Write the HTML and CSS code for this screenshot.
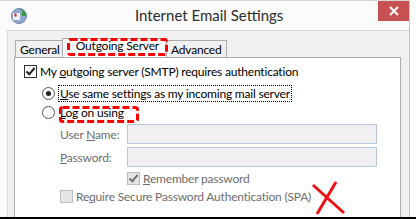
FILE: index.html
```html
<!DOCTYPE html>
<html lang="en">
<head>
    <meta charset="UTF-8">
    <title>Internet Email Settings</title>
    <link rel="stylesheet" href="styles.css">
</head>
<body>

<div class="screen">
    <div class="window">
        <div class="titlebar">
            <svg class="app-icon" width="18" height="18" viewBox="0 0 18 18">
                <circle cx="9" cy="9" r="7.5" fill="#8fa9cf"/>
                <path d="M9 1.5 A7.5 7.5 0 0 1 16.5 9 L12 9 L12 4 Z" fill="#3c9c4a"/>
                <path d="M3 6 L10 6 L10 13 L3 13 Z" fill="#eef2f8"/>
                <rect x="4.5" y="6.5" width="2" height="3" fill="#d42020"/>
                <circle cx="9" cy="9" r="7.5" fill="none" stroke="#6e86ad" stroke-width="1"/>
            </svg>
            <div class="title">Internet Email Settings</div>
            <div class="close-btn">
                <svg width="10" height="10" viewBox="0 0 10 10">
                    <path d="M1 1 L9 9 M9 1 L1 9" stroke="#fff" stroke-width="2"/>
                </svg>
            </div>
        </div>

        <div class="dialog">
            <div class="tabs">
                <div class="tab">General</div>
                <div class="tab tab-active">
                    Outgoing Server
                    <svg class="mark tab-mark" width="101" height="18" viewBox="0 0 101 18">
                        <rect x="1.5" y="1.5" width="98" height="15" rx="2" fill="none" stroke="#f00" stroke-width="3" stroke-dasharray="7 3"/>
                    </svg>
                </div>
                <div class="tab">Advanced</div>
            </div>

            <div class="page">
                <div class="row">
                    <span class="check checked"></span>
                    <span>My <u>o</u>utgoing server (SMTP) requires authentication</span>
                </div>
                <div class="row indent-1 first-option">
                    <span class="radio selected"></span>
                    <span class="focus"><u>U</u>se same settings as my incoming mail server</span>
                </div>
                <div class="row indent-1">
                    <span class="radio"></span>
                    <span class="marked">
                        <u>L</u>og on using
                        <svg class="mark" width="80" height="17" viewBox="0 0 80 17">
                            <rect x="1.5" y="1.5" width="77" height="14" rx="2" fill="none" stroke="#f00" stroke-width="3" stroke-dasharray="7 3"/>
                        </svg>
                    </span>
                </div>
                <div class="field indent-2 first-field">
                    <label class="field-label">User <u>N</u>ame:</label>
                    <div class="input"></div>
                </div>
                <div class="field indent-2">
                    <label class="field-label"><u>P</u>assword:</label>
                    <div class="input"></div>
                </div>
                <div class="row indent-3 disabled short-row">
                    <span class="check checked off"></span>
                    <span><u>R</u>emember password</span>
                </div>
                <div class="row indent-2 disabled">
                    <span class="check off"></span>
                    <span>Re<u>q</u>uire Secure Password Authentication (SPA)</span>
                </div>

                <svg class="cross" width="40" height="36" viewBox="0 0 40 36">
                    <path d="M3 5 L34 33 M26 2 L7 34" stroke="#ee1111" stroke-width="3" fill="none"/>
                </svg>
            </div>
        </div>
    </div>
</div>

</body>
</html>
```

FILE: styles.css
```css
body {
    margin: 0;
    background-color: #ffffff;
    font-family: 'Lato', 'Liberation Sans', sans-serif;
    font-size: 12px;
    letter-spacing: -0.2px;
    color: #000;
}
.screen {
    width: 416px;
    height: 217px;
    border-bottom: 2px solid #000;
    overflow: hidden;
    background-color: #ffffff;
}
.window {
    width: 410px;
    height: 217px;
    background-color: #fbfbfb;
    border-right: 1px solid #c4c4c4;
    border-top: 1px solid #d6d6d6;
    box-sizing: border-box;
}
.titlebar {
    height: 29px;
    display: flex;
    align-items: flex-start;
}
.app-icon {
    margin: 6px 0 0 10px;
}
.title {
    flex: 1;
    font-size: 15px;
    letter-spacing: 0;
    color: #2b2b2b;
    padding: 5px 0 0 107px;
}
.close-btn {
    width: 31px;
    height: 20px;
    background-color: #c75050;
    display: flex;
    align-items: center;
    justify-content: center;
}
.dialog {
    margin-left: 7px;
    height: 200px;
    background-color: #f0f0f0;
    border-left: 1px solid #d9d9d9;
    border-top: 1px solid #d9d9d9;
    padding: 9px 8px 0 6px;
}
.tabs {
    display: flex;
    height: 17px;
    align-items: flex-end;
    padding-left: 1px;
}
.tab {
    height: 16px;
    line-height: 17px;
    padding: 0 4px;
    background-color: #f0f0f0;
    border: 1px solid #acacac;
    border-bottom: none;
    margin-right: -1px;
}
.tab-active {
    position: relative;
    height: 18px;
    line-height: 13px;
    background-color: #fff;
    padding: 0 7px 0 13px;
    margin: 0 -1px 0 -2px;
    z-index: 1;
}
.page {
    position: relative;
    height: 170px;
    background-color: #fff;
    border: 1px solid #acacac;
    padding: 4px 0 0 9px;
}
.mark {
    position: absolute;
    left: 0;
    top: 1px;
}
.tab-mark {
    left: 4px;
    top: -1px;
}
.row {
    display: flex;
    align-items: center;
    height: 19px;
    gap: 3px;
}
.first-option {
    margin-top: 3px;
}
.short-row {
    height: 17px;
}
.indent-1 {
    margin-left: 18px;
    gap: 4px;
}
.indent-2 {
    margin-left: 36px;
}
.indent-3 {
    margin-left: 103px;
}
.check {
    width: 11px;
    height: 11px;
    border: 1px solid #333;
    background-color: #fff;
    position: relative;
}
.check.checked::after {
    content: "";
    position: absolute;
    left: 3px;
    top: 0px;
    width: 3px;
    height: 7px;
    border: solid #222;
    border-width: 0 2px 2px 0;
    transform: rotate(40deg);
}
.check.off {
    background-color: #e6e6e6;
    border-color: #bcbcbc;
}
.check.off::after {
    border-color: #707070;
}
.radio {
    width: 11px;
    height: 11px;
    border: 1px solid #555;
    border-radius: 50%;
    background-color: #fff;
    position: relative;
}
.radio.selected::after {
    content: "";
    position: absolute;
    left: 3px;
    top: 3px;
    width: 5px;
    height: 5px;
    border-radius: 50%;
    background-color: #222;
}
.focus {
    outline: 1px dotted #000;
    outline-offset: 0;
    padding: 0 1px;
}
.marked {
    position: relative;
    padding: 0 1px;
}
.field {
    display: flex;
    align-items: center;
    height: 20px;
    margin-bottom: 3px;
}
.first-field {
    margin-top: 2px;
}
.field-label {
    width: 67px;
    color: #6d6d6d;
}
.input {
    width: 248px;
    height: 18px;
    border: 1px solid #b5c8de;
    background-color: #f0f0f0;
}
.disabled {
    color: #6d6d6d;
}
.cross {
    position: absolute;
    left: 295px;
    top: 122px;
}
```
